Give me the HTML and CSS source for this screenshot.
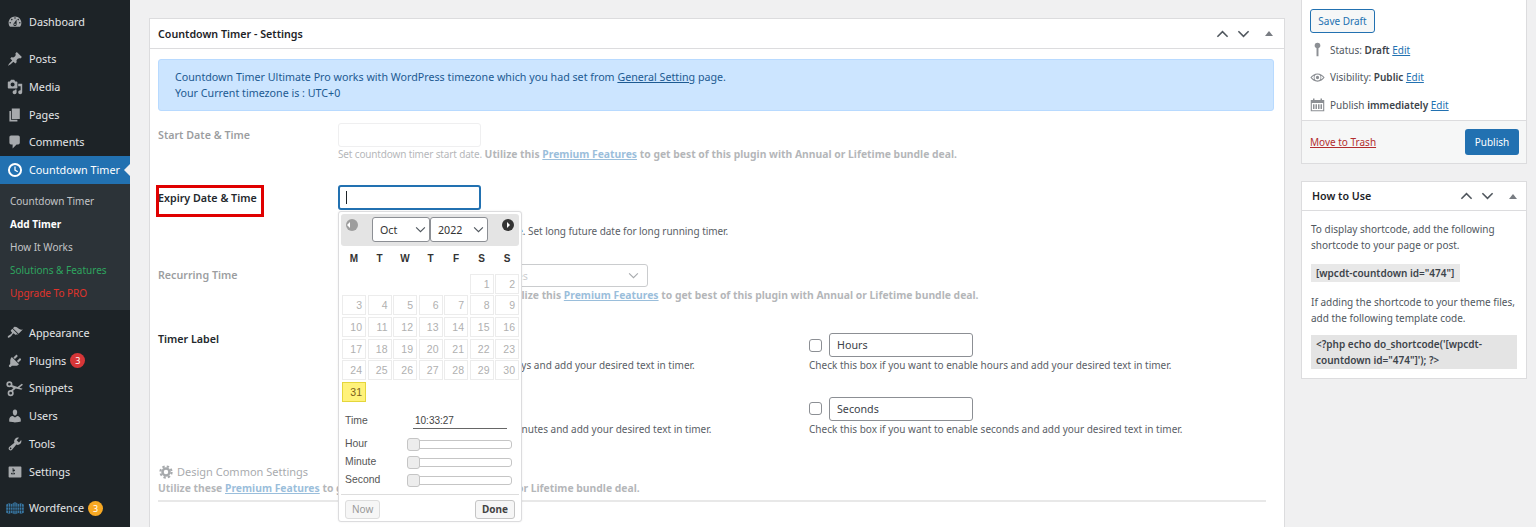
FILE: index.html
```html
<!DOCTYPE html>
<html lang="en">
<head>
<meta charset="utf-8">
<title>Countdown Timer - Settings</title>
<link rel="stylesheet" href="styles.css">
</head>
<body>
<div class="page">
<nav class="sidebar">
  <ul class="menu">
    <li class="item"><svg class="ico" viewBox="0 0 20 20"><path d="M3.76 16h12.48c1.1-1.37 1.76-3.11 1.76-5 0-4.42-3.58-8-8-8s-8 3.58-8 8c0 1.89.66 3.63 1.76 5zM10 4c.55 0 1 .45 1 1s-.45 1-1 1-1-.45-1-1 .45-1 1-1zM6 6c.55 0 1 .45 1 1s-.45 1-1 1-1-.45-1-1 .45-1 1-1zm8 0c.55 0 1 .45 1 1s-.45 1-1 1-1-.45-1-1 .45-1 1-1zm-5.37 5.55L12 7v6c0 1.1-.9 2-2 2s-2-.9-2-2c0-.57.24-1.08.63-1.45zM4 10c.55 0 1 .45 1 1s-.45 1-1 1-1-.45-1-1 .45-1 1-1zm12 0c.55 0 1 .45 1 1s-.45 1-1 1-1-.45-1-1 .45-1 1-1zm-5 3c0-.55-.45-1-1-1s-1 .45-1 1 .45 1 1 1 1-.45 1-1z"/></svg>Dashboard</li>
    <li class="item gap"><svg class="ico" viewBox="0 0 20 20"><path d="M10.44 3.02l1.82-1.82 6.36 6.35-1.83 1.82c-1.05-.68-2.48-.57-3.41.36l-.75.75c-.92.93-1.04 2.35-.35 3.41l-1.83 1.82-2.41-2.41-2.8 2.79c-.42.42-3.38 2.71-3.8 2.29s1.86-3.39 2.28-3.81l2.79-2.79L4.1 9.36l1.83-1.82c1.05.69 2.48.57 3.4-.36l.75-.75c.93-.92 1.05-2.35.36-3.41z"/></svg>Posts</li>
    <li class="item"><svg class="ico" viewBox="0 0 20 20"><path d="M13 11V4c0-.55-.45-1-1-1h-1.67L9 1H5L3.67 3H2c-.55 0-1 .45-1 1v7c0 .55.45 1 1 1h10c.55 0 1-.45 1-1zM7 4.5c1.38 0 2.5 1.12 2.5 2.5S8.38 9.5 7 9.5 4.5 8.38 4.5 7 5.62 4.5 7 4.5zM14 6h5v10.5c0 1.38-1.12 2.5-2.5 2.5S14 17.88 14 16.5s1.12-2.5 2.5-2.5c.17 0 .34.02.5.05V9h-3V6zm-4 8.05V13h2v3.5c0 1.38-1.12 2.5-2.5 2.5S7 17.88 7 16.5 8.12 14 9.5 14c.17 0 .34.02.5.05z"/></svg>Media</li>
    <li class="item"><svg class="ico" viewBox="0 0 20 20"><path d="M6 15V2h10v13H6zm-1 1h8v2H3V5h2v11z"/></svg>Pages</li>
    <li class="item"><svg class="ico" viewBox="0 0 20 20"><path d="M5 2h9c1.1 0 2 .9 2 2v7c0 1.1-.9 2-2 2h-2l-5 5v-5H5c-1.1 0-2-.9-2-2V4c0-1.1.9-2 2-2z"/></svg>Comments</li>
    <li class="item active"><svg class="ico" viewBox="0 0 20 20"><circle cx="10" cy="10" r="7.6" fill="none" stroke="#fff" stroke-width="2.4"/><path d="M9.2 5.5h1.6v4.2l3 1.8-.8 1.3-3.8-2.2z" fill="#fff"/></svg>Countdown Timer</li>
  </ul>
  <ul class="submenu">
    <li>Countdown Timer</li>
    <li class="cur">Add Timer</li>
    <li>How It Works</li>
    <li class="green">Solutions &amp; Features</li>
    <li class="red">Upgrade To PRO</li>
  </ul>
  <ul class="menu lower">
    <li class="item"><svg class="ico" viewBox="0 0 20 20"><path d="M14.48 11.06L7.41 3.99l1.5-1.5c.5-.56 2.3-.47 3.51.32 1.21.8 1.43 1.28 2.91 2.1 1.18.64 2.45 1.26 4.45.85zm-.71.71L6.7 4.7 4.93 6.47c-.39.39-.39 1.02 0 1.41l1.06 1.06c.39.39.39 1.03 0 1.42-.6.6-1.43 1.11-2.21 1.69-.35.26-.7.53-1.01.84C1.43 13.23.4 14.89 1.2 15.69c.8.79 2.46-.23 3.78-1.55.31-.31.58-.66.84-1.01.58-.78 1.09-1.61 1.69-2.21.39-.39 1.03-.39 1.42 0l1.06 1.06c.39.39 1.02.39 1.41 0z"/></svg>Appearance</li>
    <li class="item"><svg class="ico" viewBox="0 0 20 20"><path d="M13.11 4.36L9.87 7.6 8 5.73l3.24-3.24c.35-.34 1.05-.2 1.56.32.52.51.66 1.21.31 1.55zm-8 1.77l.91-1.12 9.01 9.01-1.19.84c-.71.71-2.63 1.16-3.82 1.16H6.14L4.9 17.26c-.59.59-1.54.59-2.12 0-.59-.58-.59-1.53 0-2.12l1.24-1.24v-3.88c0-1.13.4-3.19 1.09-3.89zm7.26 3.97l3.24-3.24c.34-.35 1.04-.21 1.55.31.52.51.66 1.21.31 1.55l-3.24 3.25z"/></svg>Plugins<span class="badge bred">3</span></li>
    <li class="item snip"><svg class="ico wide-ico" viewBox="0 0 20 20"><circle cx="4" cy="5" r="2.6" fill="none" stroke="#a7aaad" stroke-width="2"/><circle cx="5.500" cy="15.500" r="2.600" fill="none" stroke="#a7aaad" stroke-width="2"/><path d="M6 5.500l13.500 4.700-1.500 1.300-6.500-1.500-4.400 3.900-1.600-1.500 3.300-3L5 7.500zM12.500 9l6-4.500 1.500 1-5.500 4.500z"/></svg>Snippets</li>
    <li class="item"><svg class="ico" viewBox="0 0 20 20"><path d="M10 9.25c-2.27 0-2.73-3.44-2.73-3.44C7 4.02 7.82 2 9.97 2c2.16 0 2.98 2.02 2.71 3.81 0 0-.41 3.44-2.68 3.44zm0 2.57L12.72 10c2.39 0 4.52 2.33 4.52 4.53v2.49s-3.65 1.13-7.24 1.13c-3.65 0-7.24-1.13-7.24-1.13v-2.49c0-2.25 1.94-4.48 4.47-4.48z"/></svg>Users</li>
    <li class="item"><svg class="ico" viewBox="0 0 20 20"><path d="M16.68 9.77c-1.34 1.34-3.3 1.67-4.95.99l-5.41 6.52c-.99.99-2.59.99-3.58 0s-.99-2.59 0-3.57l6.52-5.42c-.68-1.65-.35-3.61.99-4.95 1.28-1.28 3.12-1.62 4.72-1.06l-2.89 2.89 2.82 2.82 2.86-2.87c.53 1.58.18 3.39-1.08 4.65zM3.81 16.21c.4.39 1.04.39 1.43 0 .4-.4.4-1.04 0-1.43-.39-.4-1.03-.4-1.43 0-.39.39-.39 1.03 0 1.43z"/></svg>Tools</li>
    <li class="item"><svg class="ico" viewBox="0 0 20 20"><path d="M18 16V4c0-.55-.45-1-1-1H3c-.55 0-1 .45-1 1v12c0 .55.45 1 1 1h14c.55 0 1-.45 1-1zM8 11h1c.55 0 1 .45 1 1s-.45 1-1 1H8v1.5c0 .28-.22.5-.5.5s-.5-.22-.5-.5V13H6c-.55 0-1-.45-1-1s.45-1 1-1h1V5.5c0-.28.22-.5.5-.5s.5.22.5.5V7h1c.55 0 1 .45 1 1s-.45 1-1 1h-1v5.5c0 .28-.22.5-.5.5s-.5-.22-.5-.5V9z"/></svg>Settings</li>
    <li class="item gap"><svg class="ico wf" viewBox="0 0 20 16"><path d="M0 4l3-1.500 3 .8 4-2.300 4 2.300 3-.8 3 1.500v9.500l-3 1-3-.8-4 1.300-4-1.300-3 .8-3-1z" fill="#3a7cab"/><path d="M2.500 3v11M5 3v11.500M7.500 2v12.500M10 1.500v13.500M12.500 2v12.500M15 3v11.500M17.500 3v11M0 7h20M0 10.500h20" stroke="#1d2327" stroke-width=".8" fill="none"/></svg>Wordfence<span class="badge byellow">3</span></li>
  </ul>
</nav>

<main class="main">
  <section class="postbox settings">
    <header class="box-head">
      <h2>Countdown Timer - Settings</h2>
      <div class="controls">
        <svg viewBox="0 0 14 10"><path d="M1.500 8L7 2.500 12.500 8" /></svg>
        <svg viewBox="0 0 14 10"><path d="M1.500 2L7 7.500 12.500 2" /></svg>
        <span class="tri"></span>
      </div>
    </header>
    <div class="box-body">
      <div class="alert">
        <p>Countdown Timer Ultimate Pro works with WordPress timezone which you had set from <a>General Setting</a> page.</p>
        <p>Your Current timezone is : UTC+0</p>
      </div>

      <div class="row row-start faded">
        <label class="row-label">Start Date &amp; Time</label>
        <div class="field">
          <div class="input date"></div>
          <p class="hint">Set countdown timer start date. <b>Utilize this <a>Premium Features</a> to get best of this plugin with Annual or Lifetime bundle deal.</b></p>
        </div>
      </div>

      <div class="row row-expiry">
        <label class="row-label">Expiry Date &amp; Time<span class="redbox"></span></label>
        <div class="field">
          <div class="input date focus"><i class="caret"></i></div>
          <p class="hint">Set countdown timer expiry date &amp; time. Set long future date for long running timer.</p>
          <div class="picker">
            <div class="pk-head">
              <span class="round off"><i></i></span>
              <span class="sel">Oct<svg viewBox="0 0 12 8"><path d="M1 1.500l5 5 5-5"/></svg></span>
              <span class="sel yr">2022<svg viewBox="0 0 12 8"><path d="M1 1.500l5 5 5-5"/></svg></span>
              <span class="round on"><i></i></span>
            </div>
            <div class="cal">
              <b>M</b><b>T</b><b>W</b><b>T</b><b>F</b><b>S</b><b>S</b>
              <u></u><u></u><u></u><u></u><u></u><span>1</span><span>2</span>
              <span>3</span><span>4</span><span>5</span><span>6</span><span>7</span><span>8</span><span>9</span>
              <span>10</span><span>11</span><span>12</span><span>13</span><span>14</span><span>15</span><span>16</span>
              <span>17</span><span>18</span><span>19</span><span>20</span><span>21</span><span>22</span><span>23</span>
              <span>24</span><span>25</span><span>26</span><span>27</span><span>28</span><span>29</span><span>30</span>
              <span class="today">31</span>
            </div>
            <div class="tm time"><span>Time</span><span class="tval">10:33:27</span></div>
            <div class="tm"><span>Hour</span><div class="slider"><i></i></div></div>
            <div class="tm"><span>Minute</span><div class="slider"><i></i></div></div>
            <div class="tm"><span>Second</span><div class="slider"><i></i></div></div>
            <div class="pk-foot"><button class="btn-now">Now</button><button class="btn-done">Done</button></div>
          </div>
        </div>
      </div>

      <div class="row row-rec faded">
        <label class="row-label">Recurring Time</label>
        <div class="field">
          <div class="input wide">Recurring Timer for Every X Minutes<svg viewBox="0 0 12 8"><path d="M1 1.500l5 5 5-5"/></svg></div>
          <p class="hint">Set countdown timer recurring time. <b>Utilize this <a>Premium Features</a> to get best of this plugin with Annual or Lifetime bundle deal.</b></p>
        </div>
      </div>

      <div class="row row-label-timer">
        <label class="row-label">Timer Label</label>
        <div class="timer-grid">
          <div class="tcell"><div class="tline"><span class="check"></span><span class="input lbl">Days</span></div><p class="hint">Check this box if you want to enable days and add your desired text in timer.</p></div>
          <div class="tcell"><div class="tline"><span class="check"></span><span class="input lbl">Hours</span></div><p class="hint">Check this box if you want to enable hours and add your desired text in timer.</p></div>
          <div class="tcell"><div class="tline"><span class="check"></span><span class="input lbl">Minutes</span></div><p class="hint">Check this box if you want to enable minutes and add your desired text in timer.</p></div>
          <div class="tcell"><div class="tline"><span class="check"></span><span class="input lbl">Seconds</span></div><p class="hint">Check this box if you want to enable seconds and add your desired text in timer.</p></div>
        </div>
      </div>

      <div class="design faded">
        <h3><svg class="gear" viewBox="0 0 20 20"><circle cx="10" cy="10" r="5" fill="none" stroke="#3c434a" stroke-width="3.600"/><circle cx="10" cy="10" r="8" fill="none" stroke="#3c434a" stroke-width="3" stroke-dasharray="3.300 3"/></svg>Design Common Settings</h3>
        <p class="hint"><b>Utilize these <a>Premium Features</a> to get best of this plugin with Annual or Lifetime bundle deal.</b></p>
      </div>
      <hr class="rule">
    </div>
  </section>

  <aside class="side">
    <section class="postbox publish">
      <div class="pub-body">
        <button class="btn-draft">Save Draft</button>
        <div class="meta"><svg viewBox="0 0 20 20"><path d="M10 1a3.800 3.800 0 0 1 1.300 7.400V19H8.700V8.400A3.800 3.800 0 0 1 10 1z"/></svg><span>Status: <b>Draft</b> <a>Edit</a></span></div>
        <div class="meta"><svg viewBox="0 0 20 20"><path d="M10 4.500c4 0 7.500 2.500 9.500 5.500-2 3-5.500 5.500-9.500 5.500S2.500 13 .5 10c2-3 5.500-5.500 9.500-5.500zM10 6a4 4 0 1 0 0 8 4 4 0 0 0 0-8zm-4.500 1.600A9 9 0 0 0 2.300 10a9 9 0 0 0 3.200 2.400 5 5 0 0 1 0-4.800zm9 0a5 5 0 0 1 0 4.800 9 9 0 0 0 3.200-2.400 9 9 0 0 0-3.200-2.400zM10 7.800a2.200 2.200 0 1 1 0 4.400 2.200 2.200 0 0 1 0-4.400z"/></svg><span>Visibility: <b>Public</b> <a>Edit</a></span></div>
        <div class="meta"><svg viewBox="0 0 20 20"><path d="M1 4h3V2h2v2h8V2h2v2h3v15H1zm1.500 4v9.500h15V8zM4 9.500h2v6.500H4zm3.300 0h2v6.500h-2zm3.400 0h2v6.500h-2zm3.300 0h2v6.500h-2z"/></svg><span>Publish <b>immediately</b> <a>Edit</a></span></div>
      </div>
      <div class="pub-foot"><a class="trash">Move to Trash</a><button class="btn-pub">Publish</button></div>
    </section>
    <section class="postbox howto">
      <header class="box-head small">
        <h2>How to Use</h2>
        <div class="controls">
          <svg viewBox="0 0 14 10"><path d="M1.500 8L7 2.500 12.500 8" /></svg>
          <svg viewBox="0 0 14 10"><path d="M1.500 2L7 7.500 12.500 2" /></svg>
          <span class="tri"></span>
        </div>
      </header>
      <div class="how-body">
        <p>To display shortcode, add the following shortcode to your page or post.</p>
        <code class="c1">[wpcdt-countdown id="474"]</code>
        <p>If adding the shortcode to your theme files, add the following template code.</p>
        <code class="c2">&lt;?php echo do_shortcode('[wpcdt-countdown id="474"]'); ?&gt;</code>
      </div>
    </section>
  </aside>
</main>
</div>
</body>
</html>
```
FILE: styles.css
```css
* { box-sizing: border-box; }
html, body { margin: 0; height: 527px; overflow: hidden; }
body { background: #f0f0f1; color: #3c434a; font: 10.7px/16px "Noto Sans", "Open Sans", sans-serif; }
ul { list-style: none; margin: 0; padding: 0; }
p { margin: 0; }
a { color: #2271b1; text-decoration: underline; }
button { font: inherit; }
.page { display: flex; height: 527px; overflow: hidden; }

.sidebar { width: 130px; flex: none; background: #1d2327; color: #e4e6e7; padding-top: 8.400px; height: 527px; }
.item { height: 27.800px; display: flex; align-items: center; padding-left: 7px; font-size: 10.800px; position: relative; }
.item.gap { margin-top: 9px; }
.ico { width: 16px; height: 16px; margin-right: 6px; fill: #a7aaad; flex: none; }
.wide-ico { width: 17px; height: 17px; margin-left: -1px; }
.wf { width: 18px; height: 14px; margin-left: -1px; margin-right: 5px; }
.snip { height: 27.400px; }
.active { background: #2271b1; color: #fff; }
.active .ico { fill: #fff; }
.active::after { content: ""; position: absolute; right: 0; top: 8px; border: 6px solid transparent; border-right-color: #f0f0f1; border-left: 0; }
.submenu { background: #2c3338; padding: 6px 0 5px; color: #c3c4c7; font-size: 10px; }
.submenu li { height: 23px; line-height: 23px; padding-left: 10px; }
.submenu .cur { color: #fff; font-weight: 700; }
.submenu .green { color: #2ea55f; }
.submenu .red { color: #e0332b; }
.lower { margin-top: 9px; }
.badge { width: 15px; height: 15px; border-radius: 50%; margin-left: 4px; font-size: 9px; line-height: 15px; text-align: center; }
.bred { background: #d63638; color: #fff; }
.byellow { background: #f7a823; color: #fff; }

.main { flex: none; width: 1406px; display: flex; align-items: flex-start; padding-left: 19px; }
.postbox { background: #fff; border: 1px solid #dcdcde; }
.settings { width: 1136px; margin-top: 18px; height: 560px; flex: none; }
.box-head { height: 30px; border-bottom: 1px solid #dcdcde; display: flex; align-items: center; justify-content: space-between; padding: 0 11px 0 8px; }
.box-head h2 { margin: 0; font-size: 10.700px; font-weight: 600; color: #1d2327; }
.controls { display: flex; align-items: center; gap: 8px; }
.controls svg { width: 13px; height: 10px; fill: none; stroke: #50575e; stroke-width: 1.700; }
.controls .tri { margin-left: 7px; border: 4px solid transparent; border-top: 0; border-bottom: 5px solid #787c82; }
.box-body { padding: 10px 10px 0 8px; }

.alert { height: 52px; background: #cce5ff; border: 1px solid #b8daff; border-radius: 3px; padding: 9px 16px; color: #1c5a92; font-size: 10.700px; }
.alert a { color: #1c5a92; }
.row { display: grid; grid-template-columns: 180px 1fr; }
.row-start { height: 62px; margin-top: 12px; }
.row-expiry { height: 79px; position: relative; z-index: 2; }
.row-rec { height: 69px; }
.row-label-timer { height: 124px; }
.row-label { font-weight: 600; color: #23282d; padding-top: 3px; position: relative; height: 20px; }
.row-start .row-label { padding-top: 4px; }
.row-expiry .row-label { padding-top: 5px; }
.row-label-timer .row-label { padding-top: 0; margin-top: -2px; }
.faded { opacity: .45; }
.field { position: relative; }
.input { display: block; background: #fff; border: 1px solid #8c8f94; border-radius: 3px; }
.date { width: 143px; height: 24px; }
.focus { height: 25px; border: 2px solid #2271b1; position: relative; }
.caret { position: absolute; left: 6px; top: 4px; width: 1px; height: 13px; background: #1d2327; }
.hint { color: #5a6066; font-size: 10px; line-height: 16px; }
.hint b { font-size: 10.350px; font-weight: 700; letter-spacing: 0; }
.row-start .hint { margin-top: -1px; letter-spacing: -.15px; }
.row-start .input { border-color: #dcdcde; }
.row-expiry .hint { margin-top: 13px; letter-spacing: -.05px; }
.row-rec .hint { letter-spacing: -.15px; }
.wide { width: 310px; height: 23px; padding: 3px 8px; display: flex; justify-content: space-between; align-items: center; color: #8c8f94; }
.wide svg { width: 11px; height: 7px; fill: none; stroke: #3c434a; stroke-width: 1.200; }
.redbox { position: absolute; left: -2px; top: 0; width: 108px; height: 32px; border: 3px solid #e00000; }

.timer-grid { display: grid; grid-template-columns: 471px 1fr; grid-auto-rows: 63.500px; }
.tline { display: flex; align-items: center; height: 24px; }
.check { width: 13px; height: 13px; border: 1px solid #8c8f94; border-radius: 3px; margin-right: 7px; }
.lbl { width: 144px; height: 24px; padding: 3px 7px; }

.design { margin-top: 7px; }
.design h3 { margin: 0; font-size: 11px; font-weight: 400; display: flex; align-items: center; }
.gear { width: 14px; height: 14px; margin: 0 4px 0 1px; }
.rule { margin: 4px 8px 0 0; border: 0; border-top: 2px solid #e8e8e8; }

.picker { position: absolute; left: 0; top: 26px; width: 184px; height: 311px; background: #fff; border: 1px solid #dcdcde; border-radius: 3px; padding: 2px; box-shadow: 0 0 2px rgba(0,0,0,.08); color: #333; }
.pk-head { height: 32px; background: #e4e4e4; border-radius: 3px; position: relative; display: flex; padding: 3px 0 0 31px; }
.sel { width: 58px; height: 25px; background: #fff; border: 1px solid #8c8f94; border-radius: 3px; display: flex; align-items: center; justify-content: space-between; padding: 0 3px 0 7px; font-size: 10.700px; }
.sel svg { width: 11px; height: 7px; fill: none; stroke: #50575e; stroke-width: 1.300; }
.round { position: absolute; top: 5px; width: 12px; height: 12px; border-radius: 50%; display: block; }
.round.off { left: 5px; background: #9d9d9d; }
.round.on { right: 5px; background: #333; }
.round i { position: absolute; top: 3px; border: 3px solid transparent; }
.off i { left: 1px; border-right-color: #fff; border-left: 0; }
.on i { left: 5px; border-left-color: #fff; border-right: 0; }
.cal { display: grid; grid-template-columns: repeat(7, 24px); column-gap: 1.500px; grid-auto-rows: 20px; row-gap: 1.700px; padding: 6px 0 0 1px; font-family: "Liberation Sans", Arial, sans-serif; }
.cal b { font-size: 10px; text-align: center; color: #333; line-height: 20px; height: 20px; margin-top: -3px; }
.cal span { border: 1px solid #ececec; color: #b0b0b0; text-align: right; padding-right: 3px; font-size: 10.500px; line-height: 18px; }
.cal u { display: block; }
.cal .today { background: #fff27a; border-color: #e4d63c; color: #7a5f1a; }
.tm { display: flex; align-items: center; height: 18px; padding-left: 4px; font: 10.400px/14px "Liberation Sans", Arial, sans-serif; color: #555; }
.tm span:first-child { width: 62px; }
.time { height: 22px; margin-top: 8px; margin-bottom: 3px; }
.tm.time span:first-child { width: 68px; }
.tm .tval { width: 94px; border-bottom: 1px solid #666; line-height: 15px; padding-left: 2px; color: #444; font-size: 10px; }
.slider { width: 105px; height: 9px; border: 1px solid #c5c5c5; border-radius: 3px; position: relative; }
.slider i { position: absolute; left: -1px; top: -3px; width: 13px; height: 13px; background: #ededed; border: 1px solid #c5c5c5; border-radius: 3px; }
.pk-foot { border-top: 1px solid #ddd; margin-top: 5px; display: flex; justify-content: space-between; padding: 5px 4px 0 4px; }
.pk-foot button { height: 19px; background: #f6f6f6; border: 1px solid #c5c5c5; border-radius: 3px; padding: 0 6px; font-size: 10px; line-height: 15px; }
.pk-foot .btn-now { color: #999; border-color: #ddd; }
.btn-done { color: #444; font-weight: 700; }

.side { width: 226px; margin-left: 16px; flex: none; }
.publish { height: 164px; border-top: 0; display: flex; flex-direction: column; }
.pub-body { flex: 1; padding: 9px 9px 0 8px; font-size: 10px; }
.btn-draft { display: block; width: 65px; height: 24px; background: #f6f7f7; border: 1px solid #2271b1; border-radius: 3px; color: #2271b1; padding: 0; margin-bottom: 3px; font-size: 10px; }
.meta { height: 27.600px; display: flex; align-items: center; color: #50575e; }
.meta svg { width: 15px; height: 15px; fill: #8c8f94; margin-right: 5px; flex: none; }
.meta b { color: #3c434a; font-weight: 600; }
.pub-foot { height: 43px; background: #f6f7f7; border-top: 1px solid #dcdcde; display: flex; align-items: center; justify-content: space-between; padding: 0 7px 0 8px; font-size: 10px; }
.trash { color: #b32d2e; }
.btn-pub { width: 54px; height: 26px; background: #2271b1; border: 0; border-radius: 3px; color: #fff; padding: 0; font-size: 10px; }
.howto { margin-top: 17px; height: 198px; }
.small { height: 29px; padding: 0 9px 0 10px; }
.how-body { padding: 10px 9px 0 9px; color: #50575e; font-size: 10px; }
code { display: block; background: #e8e8e8; color: #3c434a; font: 600 10px/16px "Noto Sans", sans-serif; padding: 1px 5px; margin: 11px 0 12px; }
.c1 { width: 149px; white-space: nowrap; }
.c2 { margin: 9px 0 0; background: #e4e4e4; }
```
